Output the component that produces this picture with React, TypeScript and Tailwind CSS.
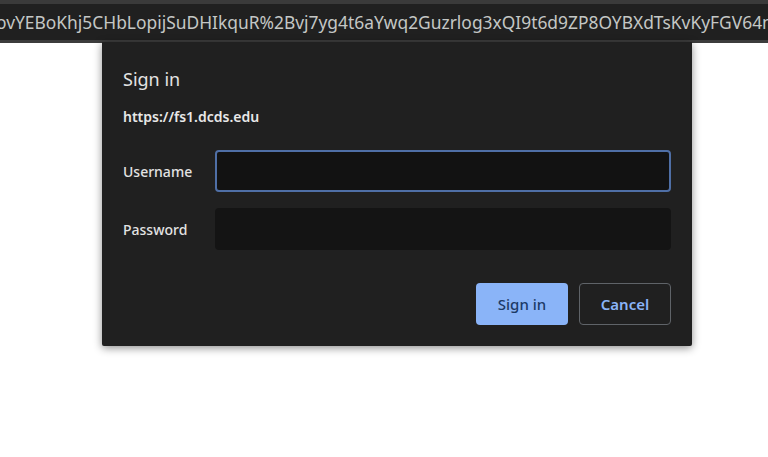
export default function App() {
  const url =
    "ovYEBoKhj5CHbLopijSuDHIkquR%2Bvj7yg4t6aYwq2Guzrlog3xQI9t6d9ZP8OYBXdTsKvKyFGV64m";

  return (
    <div
      className="relative h-[457px] w-[768px] overflow-hidden bg-white"
      style={{ fontFamily: '"Noto Sans", "Open Sans", sans-serif' }}
    >
      {/* address bar */}
      <div className="h-[4px] bg-[#3a3a3a]" />
      <div className="flex h-[36px] items-center overflow-hidden whitespace-nowrap bg-[#202020] text-[17.4px] text-[#c4c7c5]">
        <span className="-ml-[4px]">{url}</span>
      </div>
      <div className="h-[3px] bg-[#3c3c3c]" />

      {/* sign in dialog */}
      <div className="absolute left-[102px] top-[42px] w-[590px] rounded-b-[2px] bg-[#202020] px-[21px] pb-[21px] pt-[24px] text-[#e3e3e3] shadow-[0_2px_8px_rgba(0,0,0,0.45)]">
        <div className="text-[18px] leading-[26px]">Sign in</div>
        <div className="mt-[15px] text-[14px] font-semibold leading-[20px] text-[#e8e8e8]">
          https://fs1.dcds.edu
        </div>

        <div className="mt-[23px] grid grid-cols-[92px_1fr] items-center gap-y-[16px]">
          <label className="text-[14px] font-medium">Username</label>
          <input
            autoFocus
            className="h-[42px] w-[456px] rounded-[4px] border-2 border-[#4f6fa6] bg-[#121212] px-2 text-[14px] text-white outline-none"
          />
          <label className="text-[14px] font-medium">Password</label>
          <input
            type="password"
            className="h-[42px] w-[456px] rounded-[4px] bg-[#141414] px-2 text-[14px] text-white outline-none"
          />
        </div>

        <div className="mt-[33px] flex justify-end gap-[11px]">
          <button className="h-[42px] w-[92px] rounded-[4px] bg-[#8ab4f8] text-[15px] font-medium text-[#1c3a66]">
            Sign in
          </button>
          <button className="h-[42px] w-[92px] rounded-[4px] border border-[#5f6368] text-[15px] font-semibold text-[#8ab4f8]">
            Cancel
          </button>
        </div>
      </div>
    </div>
  );
}
